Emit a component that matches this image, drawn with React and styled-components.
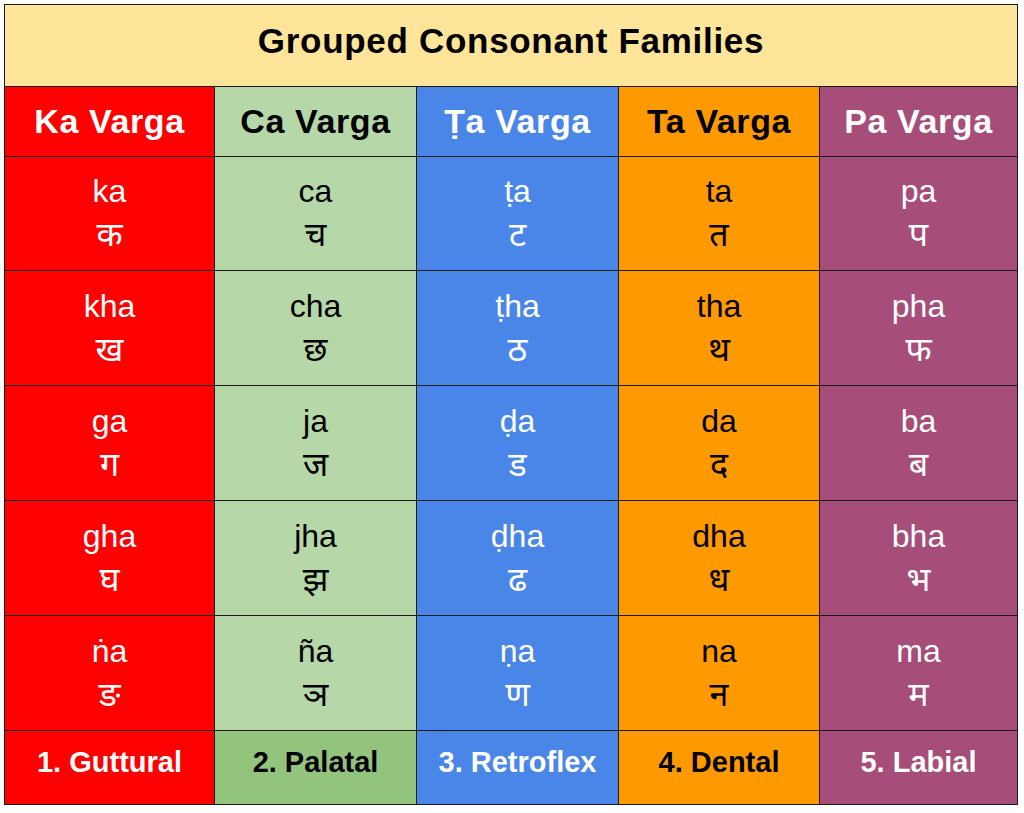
import styled, { createGlobalStyle } from 'styled-components'

const GlobalStyle = createGlobalStyle`
  html, body {
    margin: 0;
    padding: 0;
    background: #ffffff;
  }
  body {
    font-family: "Liberation Sans", Arial, "Noto Sans Devanagari", "Noto Sans", sans-serif;
  }
`

const colors = {
  guttural: { bg: '#ff0000', fg: '#ffffff', foot: '#ff0000' },
  palatal: { bg: '#b6d7a8', fg: '#000000', foot: '#93c47d' },
  retroflex: { bg: '#4a86e8', fg: '#ffffff', foot: '#4a86e8' },
  dental: { bg: '#ff9900', fg: '#000000', foot: '#ff9900' },
  labial: { bg: '#a64d79', fg: '#ffffff', foot: '#a64d79' },
}

const families = [
  {
    key: 'guttural',
    title: 'Ka Varga',
    label: '1. Guttural',
    letters: [['ka', 'क'], ['kha', 'ख'], ['ga', 'ग'], ['gha', 'घ'], ['ṅa', 'ङ']],
  },
  {
    key: 'palatal',
    title: 'Ca Varga',
    label: '2. Palatal',
    letters: [['ca', 'च'], ['cha', 'छ'], ['ja', 'ज'], ['jha', 'झ'], ['ña', 'ञ']],
  },
  {
    key: 'retroflex',
    title: 'Ṭa Varga',
    label: '3. Retroflex',
    letters: [['ṭa', 'ट'], ['ṭha', 'ठ'], ['ḍa', 'ड'], ['ḍha', 'ढ'], ['ṇa', 'ण']],
  },
  {
    key: 'dental',
    title: 'Ta Varga',
    label: '4. Dental',
    letters: [['ta', 'त'], ['tha', 'थ'], ['da', 'द'], ['dha', 'ध'], ['na', 'न']],
  },
  {
    key: 'labial',
    title: 'Pa Varga',
    label: '5. Labial',
    letters: [['pa', 'प'], ['pha', 'फ'], ['ba', 'ब'], ['bha', 'भ'], ['ma', 'म']],
  },
]

const Page = styled.div`
  padding: 4px 6px 8px 4px;
`

const Table = styled.div`
  display: grid;
  grid-template-columns: 209px 201px 201px 200px 197px;
  grid-template-rows: 81px 69px 113px 114px 114px 114px 114px 73px;
  gap: 1px;
  width: max-content;
  background: #1a1a1a;
  border: 1px solid #1a1a1a;
`

const Title = styled.div`
  grid-column: 1 / -1;
  background: #ffe599;
  color: #000;
  display: flex;
  align-items: center;
  justify-content: center;
  padding-bottom: 10px;
  font-weight: 700;
  font-size: 35px;
  letter-spacing: 0.7px;
`

const Cell = styled.div`
  background: ${(p) => colors[p.$family].bg};
  color: ${(p) => colors[p.$family].fg};
  display: flex;
  flex-direction: column;
  align-items: center;
  justify-content: center;
`

const Heading = styled(Cell)`
  font-weight: 700;
  font-size: 34px;
  letter-spacing: 0.6px;
`

const Letter = styled(Cell)`
  padding-top: 4px;
  font-size: 32px;
  line-height: 45px;
`

const Footer = styled(Cell)`
  background: ${(p) => colors[p.$family].foot};
  padding-bottom: 10px;
  font-weight: 700;
  font-size: 29px;
`

const Roman = styled.span``

const Deva = styled.span`
  font-family: "Noto Sans Devanagari", "Noto Sans", "Liberation Sans", sans-serif;
  font-size: 34px;
  line-height: 48px;
`

export default function App() {
  return (
    <Page>
      <GlobalStyle />
      <Table>
        <Title>Grouped Consonant Families</Title>
        {families.map((f) => (
          <Heading key={f.key} $family={f.key}>{f.title}</Heading>
        ))}
        {[0, 1, 2, 3, 4].map((row) =>
          families.map((f) => (
            <Letter key={`${f.key}-${row}`} $family={f.key}>
              <Roman>{f.letters[row][0]}</Roman>
              <Deva>{f.letters[row][1]}</Deva>
            </Letter>
          ))
        )}
        {families.map((f) => (
          <Footer key={`foot-${f.key}`} $family={f.key}>{f.label}</Footer>
        ))}
      </Table>
    </Page>
  )
}
